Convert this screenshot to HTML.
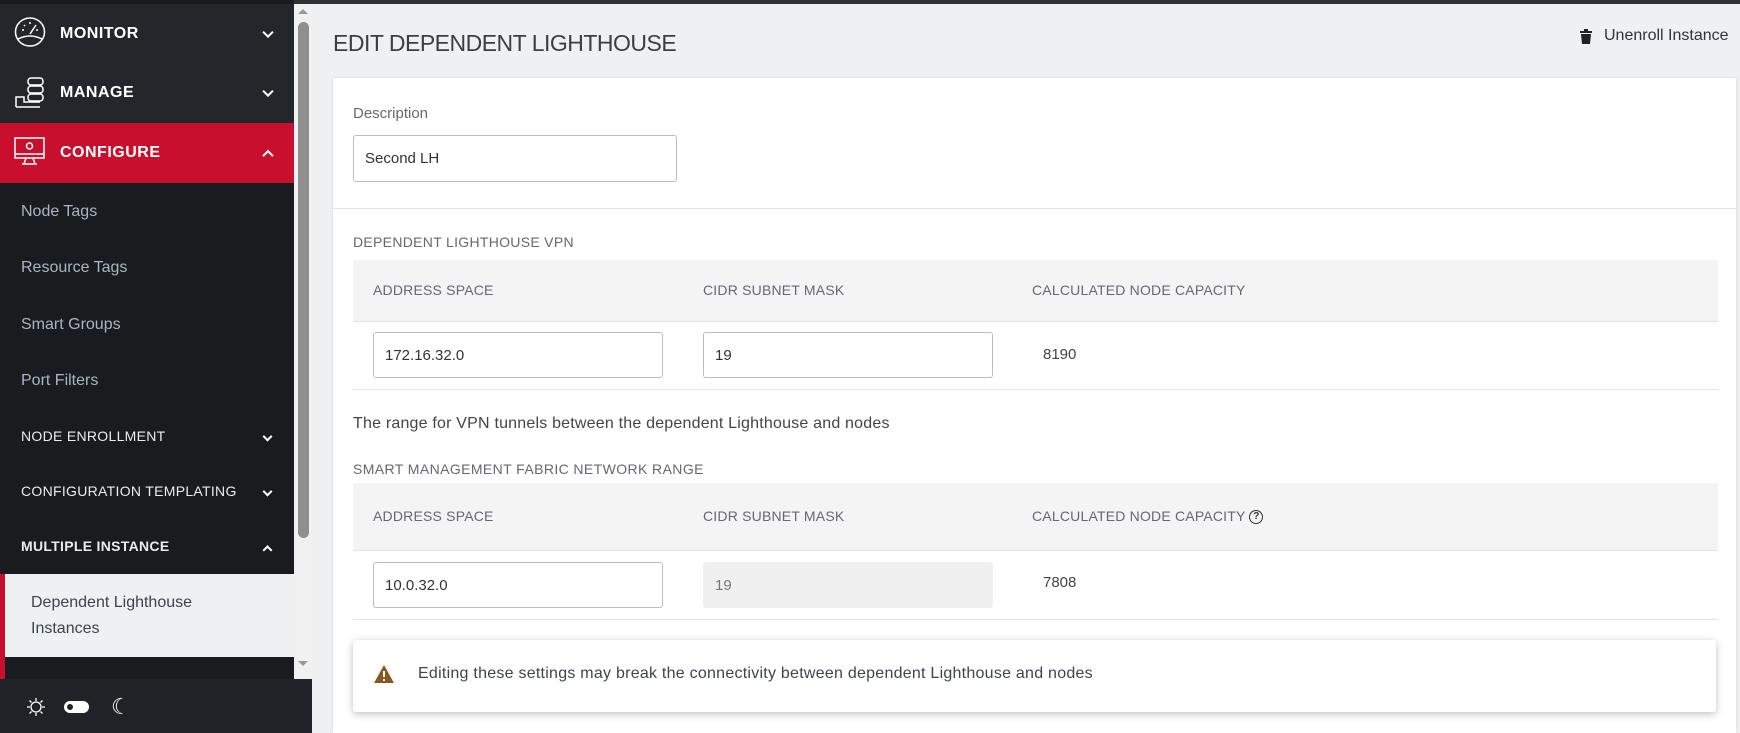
<!DOCTYPE html>
<html><head><meta charset="utf-8"><style>
*{box-sizing:border-box;margin:0;padding:0}
body{width:1740px;height:733px;overflow:hidden;background:#eff0f2;font-family:"Liberation Sans",sans-serif;position:relative;color:#3a3f47}
.a{position:absolute}
#sb{left:0;top:0;width:294px;height:733px;background:#1a1b1e}
.top{left:0;top:0;width:1740px;height:4px;background:#2e3135}
.hd{left:0;width:294px;height:60px;background:#23272b;color:#fff;font-weight:bold;font-size:16px;letter-spacing:.5px}
.hd span{position:absolute;left:60px;top:50%;transform:translateY(-50%)}
.chev{position:absolute;left:264px;top:50%;width:8px;height:8px;border-right:2px solid #fff;border-bottom:2px solid #fff;transform:translateY(-70%) rotate(45deg)}
.up{transform:translateY(-20%) rotate(-135deg)}
.it{left:21px;color:#a9b4c6;font-size:16px}
.sec{left:21px;color:#e8ecf3;font-size:14px;letter-spacing:.3px}
.sec .chev{left:243px;width:7px;height:7px}
.box{border:1px solid #b7bccb;border-radius:3px;background:#fff;font-size:15px;color:#333;padding-left:11px;display:flex;align-items:center}
.lbl{font-size:15px;color:#667}
.th{font-size:14px;color:#667;letter-spacing:.2px}
</style></head><body>
<div class="a top"></div>
<div class="a" id="sb"></div>
<div class="a hd" style="top:4px;height:59px"><svg class="a" style="left:14px;top:10px" width="32" height="36" viewBox="0 0 32 36" fill="none" stroke="#fff" stroke-width="1.5"><ellipse cx="16" cy="18" rx="14.5" ry="14"/><path d="M4 25q12-6 24 0M16 20l6-9M8 16h2M22 16h2M16 8v2M10 11l1 1"/></svg><span>MONITOR</span><i class="chev"></i></div>
<div class="a hd" style="top:63px"><svg class="a" style="left:14px;top:14px" width="32" height="32" viewBox="0 0 32 32" fill="none" stroke="#fff" stroke-width="1.5"><rect x="14" y="1" width="15" height="7" rx="3"/><rect x="14" y="9" width="15" height="7" rx="3"/><rect x="14" y="17" width="15" height="7" rx="3"/><path d="M2 30V20h8v5h16M2 30h24"/></svg><span>MANAGE</span><i class="chev"></i></div>
<div class="a hd" style="top:123px;background:#c8102e"><svg class="a" style="left:14px;top:13px" width="32" height="32" viewBox="0 0 32 32" fill="none" stroke="#fff" stroke-width="1.5"><rect x="1" y="2" width="29" height="20"/><path d="M1 18h29M12 22l-2 6h11l-2-6M8 28h15"/><circle cx="15.5" cy="10" r="3"/></svg><span>CONFIGURE</span><i class="chev up"></i></div>
<div class="a it" style="top:203px">Node Tags</div>
<div class="a it" style="top:259px">Resource Tags</div>
<div class="a it" style="top:316px">Smart Groups</div>
<div class="a it" style="top:372px">Port Filters</div>
<div class="a sec" style="top:428px;width:270px;height:20px">NODE ENROLLMENT<i class="chev"></i></div>
<div class="a sec" style="top:483px;width:270px;height:20px">CONFIGURATION TEMPLATING<i class="chev"></i></div>
<div class="a sec" style="top:538px;width:270px;height:20px;font-weight:bold">MULTIPLE INSTANCE<i class="chev up"></i></div>
<div class="a" style="left:0;top:574px;width:294px;height:83px;background:#eff0f2;border-left:5px solid #c8102e"></div>
<div class="a" style="left:0;top:657px;width:5px;height:22px;background:#c8102e"></div>
<div class="a" style="left:31px;top:590px;font-size:16px;color:#3b4250;line-height:26px">Dependent Lighthouse<br>Instances</div>
<div class="a" style="left:294px;top:4px;width:18px;height:675px;background:#f1f1f1"></div>
<div class="a" style="left:298px;top:22px;width:11px;height:516px;background:#8f8f8f;border-radius:6px"></div>
<div class="a" style="left:298px;top:9px;width:0;height:0;border:5px solid transparent;border-bottom-color:#999;border-top:0"></div>
<div class="a" style="left:298px;top:661px;width:0;height:0;border:5px solid transparent;border-top-color:#999;border-bottom:0"></div>
<div class="a" style="left:0;top:679px;width:312px;height:54px;background:#1f2226"></div>
<svg class="a" style="left:26px;top:697px" width="20" height="20" viewBox="0 0 20 20" fill="none" stroke="#fff" stroke-width="1.3"><circle cx="10" cy="10" r="5"/><path d="M10 1v3M10 16v3M1 10h3M16 10h3M3.5 3.5l2 2M14.5 14.5l2 2M3.5 16.5l2-2M14.5 5.5l2-2"/></svg>
<div class="a" style="left:64px;top:701px;width:25px;height:12px;border-radius:6px;background:#fff"><div class="a" style="left:3px;top:3px;width:6px;height:6px;border-radius:50%;background:#1f2226"></div></div>
<div class="a" style="left:111px;top:694px;color:#fff;font-size:22px">☾</div>

<div class="a" style="left:333px;top:30px;font-size:23px;color:#3a3f47;letter-spacing:-.5px">EDIT DEPENDENT LIGHTHOUSE</div>
<svg class="a" style="left:1580px;top:29px" width="12" height="15" viewBox="0 0 12 15" fill="#222"><rect x="0" y="2" width="12" height="2"/><rect x="4" y="0" width="4" height="2"/><path d="M1 5h10l-1 10H2z"/></svg>
<div class="a" style="left:1604px;top:27px;font-size:16px;color:#2d3440">Unenroll Instance</div>

<div class="a" style="left:333px;top:78px;width:1403px;height:655px;background:#fff;box-shadow:0 0 3px rgba(0,0,0,.1)"></div>
<div class="a lbl" style="left:353px;top:105px">Description</div>
<div class="a box" style="left:353px;top:135px;width:324px;height:47px">Second LH</div>
<div class="a" style="left:333px;top:208px;width:1403px;height:1px;background:#e2e4e8"></div>
<div class="a lbl" style="left:353px;top:234px;font-size:14px;letter-spacing:.3px">DEPENDENT LIGHTHOUSE VPN</div>
<div class="a" style="left:353px;top:260px;width:1365px;height:62px;background:#f4f4f5;border-bottom:1px solid #e2e4e8"></div>
<div class="a th" style="left:373px;top:282px">ADDRESS SPACE</div>
<div class="a th" style="left:703px;top:282px">CIDR SUBNET MASK</div>
<div class="a th" style="left:1032px;top:282px">CALCULATED NODE CAPACITY</div>
<div class="a box" style="left:373px;top:332px;width:290px;height:46px">172.16.32.0</div>
<div class="a box" style="left:703px;top:332px;width:290px;height:46px">19</div>
<div class="a" style="left:1043px;top:346px;font-size:15px;color:#444">8190</div>
<div class="a" style="left:353px;top:389px;width:1365px;height:1px;background:#e2e4e8"></div>
<div class="a" style="left:353px;top:415px;font-size:16px;color:#444;letter-spacing:.2px">The range for VPN tunnels between the dependent Lighthouse and nodes</div>
<div class="a lbl" style="left:353px;top:461px;font-size:14px;letter-spacing:.4px">SMART MANAGEMENT FABRIC NETWORK RANGE</div>
<div class="a" style="left:353px;top:483px;width:1365px;height:68px;background:#f4f4f5;border-bottom:1px solid #e2e4e8"></div>
<div class="a th" style="left:373px;top:508px">ADDRESS SPACE</div>
<div class="a th" style="left:703px;top:508px">CIDR SUBNET MASK</div>
<div class="a th" style="left:1032px;top:508px">CALCULATED NODE CAPACITY <span style="display:inline-block;width:14px;height:14px;border:1.5px solid #333;border-radius:50%;font-size:10px;text-align:center;line-height:11px;color:#333;font-weight:bold;vertical-align:middle">?</span></div>
<div class="a box" style="left:373px;top:562px;width:290px;height:46px">10.0.32.0</div>
<div class="a box" style="left:703px;top:562px;width:290px;height:46px;background:#f0f0f1;border-color:#f0f0f1;color:#777">19</div>
<div class="a" style="left:1043px;top:574px;font-size:15px;color:#444">7808</div>
<div class="a" style="left:353px;top:619px;width:1365px;height:1px;background:#e2e4e8"></div>
<div class="a" style="left:353px;top:640px;width:1363px;height:72px;background:#fff;border-radius:3px;box-shadow:0 2px 8px rgba(0,0,0,.25)"></div>
<svg class="a" style="left:373px;top:664px" width="22" height="20" viewBox="0 0 22 20"><path d="M11 1L21 19H1z" fill="#8a5a1c"/><rect x="10" y="7" width="2" height="6" fill="#fff"/><rect x="10" y="15" width="2" height="2" fill="#fff"/></svg>
<div class="a" style="left:418px;top:665px;font-size:16px;color:#3d4450;letter-spacing:.25px">Editing these settings may break the connectivity between dependent Lighthouse and nodes</div>
</body></html>
